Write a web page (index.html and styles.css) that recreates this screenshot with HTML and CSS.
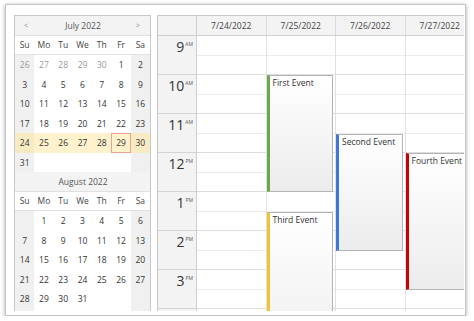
FILE: index.html
```html
<!DOCTYPE html>
<html lang="en">
<head>
    <meta charset="UTF-8">
    <meta name="viewport" content="width=device-width, initial-scale=1.0">
    <title>Calendar</title>
    <link rel="stylesheet" href="styles.css">
</head>
<body>

    <div class="window">
        <div class="content">

            <div class="nav">
                <div class="month">
                    <div class="month-title">
                        <span class="arrow">&lt;</span>
                        <span>July 2022</span>
                        <span class="arrow">&gt;</span>
                    </div>
                    <div class="days">
                        <div class="dayname">Su</div><div class="dayname">Mo</div><div class="dayname">Tu</div><div class="dayname">We</div><div class="dayname">Th</div><div class="dayname">Fr</div><div class="dayname">Sa</div>

                        <div class="day weekend other">26</div><div class="day other">27</div><div class="day other">28</div><div class="day other">29</div><div class="day other">30</div><div class="day">1</div><div class="day weekend">2</div>
                        <div class="day weekend">3</div><div class="day">4</div><div class="day">5</div><div class="day">6</div><div class="day">7</div><div class="day">8</div><div class="day weekend">9</div>
                        <div class="day weekend">10</div><div class="day">11</div><div class="day">12</div><div class="day">13</div><div class="day">14</div><div class="day">15</div><div class="day weekend">16</div>
                        <div class="day weekend">17</div><div class="day">18</div><div class="day">19</div><div class="day">20</div><div class="day">21</div><div class="day">22</div><div class="day weekend">23</div>
                        <div class="day weekend sel">24</div><div class="day sel">25</div><div class="day sel">26</div><div class="day sel">27</div><div class="day sel">28</div><div class="day sel today">29</div><div class="day weekend sel">30</div>
                        <div class="day weekend">31</div><div class="day"></div><div class="day"></div><div class="day"></div><div class="day"></div><div class="day"></div><div class="day weekend"></div>
                    </div>
                </div>

                <div class="month">
                    <div class="month-title">
                        <span class="arrow"></span>
                        <span>August 2022</span>
                        <span class="arrow"></span>
                    </div>
                    <div class="days">
                        <div class="dayname">Su</div><div class="dayname">Mo</div><div class="dayname">Tu</div><div class="dayname">We</div><div class="dayname">Th</div><div class="dayname">Fr</div><div class="dayname">Sa</div>

                        <div class="day weekend"></div><div class="day">1</div><div class="day">2</div><div class="day">3</div><div class="day">4</div><div class="day">5</div><div class="day weekend">6</div>
                        <div class="day weekend">7</div><div class="day">8</div><div class="day">9</div><div class="day">10</div><div class="day">11</div><div class="day">12</div><div class="day weekend">13</div>
                        <div class="day weekend">14</div><div class="day">15</div><div class="day">16</div><div class="day">17</div><div class="day">18</div><div class="day">19</div><div class="day weekend">20</div>
                        <div class="day weekend">21</div><div class="day">22</div><div class="day">23</div><div class="day">24</div><div class="day">25</div><div class="day">26</div><div class="day weekend">27</div>
                        <div class="day weekend">28</div><div class="day">29</div><div class="day">30</div><div class="day">31</div><div class="day"></div><div class="day"></div><div class="day weekend"></div>
                        <div class="day weekend"></div><div class="day"></div><div class="day"></div><div class="day"></div><div class="day"></div><div class="day"></div><div class="day weekend"></div>
                    </div>
                </div>
            </div>

            <div class="calendar">
                <div class="cal-header">
                    <div class="corner"></div>
                    <div class="col-head">7/24/2022</div>
                    <div class="col-head">7/25/2022</div>
                    <div class="col-head">7/26/2022</div>
                    <div class="col-head">7/27/2022</div>
                </div>

                <div class="cal-body">
                    <div class="hours">
                        <div class="hour"><span class="num">9</span><span class="ampm">AM</span></div>
                        <div class="hour"><span class="num">10</span><span class="ampm">AM</span></div>
                        <div class="hour"><span class="num">11</span><span class="ampm">AM</span></div>
                        <div class="hour"><span class="num">12</span><span class="ampm">PM</span></div>
                        <div class="hour"><span class="num">1</span><span class="ampm">PM</span></div>
                        <div class="hour"><span class="num">2</span><span class="ampm">PM</span></div>
                        <div class="hour"><span class="num">3</span><span class="ampm">PM</span></div>
                        <div class="hour"></div>
                    </div>

                    <div class="col">
                        <div class="cell"></div><div class="cell"></div><div class="cell"></div><div class="cell"></div>
                        <div class="cell"></div><div class="cell"></div><div class="cell"></div><div class="cell"></div>
                        <div class="cell"></div><div class="cell"></div><div class="cell"></div><div class="cell"></div>
                        <div class="cell"></div><div class="cell"></div><div class="cell"></div><div class="cell"></div>
                    </div>

                    <div class="col">
                        <div class="cell"></div><div class="cell"></div><div class="cell"></div><div class="cell"></div>
                        <div class="cell"></div><div class="cell"></div><div class="cell"></div><div class="cell"></div>
                        <div class="cell"></div><div class="cell"></div><div class="cell"></div><div class="cell"></div>
                        <div class="cell"></div><div class="cell"></div><div class="cell"></div><div class="cell"></div>
                        <div class="event green" style="top: 39px; height: 117px;">First Event</div>
                        <div class="event yellow" style="top: 175.5px; height: 156px;">Third Event</div>
                    </div>

                    <div class="col">
                        <div class="cell"></div><div class="cell"></div><div class="cell"></div><div class="cell"></div>
                        <div class="cell"></div><div class="cell"></div><div class="cell"></div><div class="cell"></div>
                        <div class="cell"></div><div class="cell"></div><div class="cell"></div><div class="cell"></div>
                        <div class="cell"></div><div class="cell"></div><div class="cell"></div><div class="cell"></div>
                        <div class="event blue" style="top: 97.5px; height: 117px;">Second Event</div>
                    </div>

                    <div class="col">
                        <div class="cell"></div><div class="cell"></div><div class="cell"></div><div class="cell"></div>
                        <div class="cell"></div><div class="cell"></div><div class="cell"></div><div class="cell"></div>
                        <div class="cell"></div><div class="cell"></div><div class="cell"></div><div class="cell"></div>
                        <div class="cell"></div><div class="cell"></div><div class="cell"></div><div class="cell"></div>
                        <div class="event red" style="top: 117px; height: 136.5px;">Fourth Event</div>
                    </div>
                </div>
            </div>

        </div>
    </div>

</body>
</html>
```

FILE: styles.css
```css
body {
    margin: 0;
    background-color: #fff;
    font-family: 'Open Sans', 'Noto Sans', sans-serif;
    color: #333;
}

.window {
    margin: 4px 0 0 5px;
    width: 461px;
    height: 312px;
    box-sizing: border-box;
    border: 1px solid #c4c4c4;
    box-shadow: 0 1px 4px rgba(0, 0, 0, 0.35);
    padding: 10px 1px 4px 8px;
    background-color: #fff;
}

.content {
    display: flex;
    gap: 6px;
    height: 100%;
    overflow: hidden;
}

/* navigator */

.nav {
    flex: 0 0 137px;
    border: 1px solid #c8c8c8;
    box-sizing: border-box;
    font-size: 8.5px;
}

.month-title {
    height: 19.5px;
    display: flex;
    align-items: center;
    justify-content: space-between;
    padding: 0 8px 0 9px;
    background-color: #f3f3f3;
    border-bottom: 1px solid #e0e0e0;
    box-sizing: border-box;
    color: #555;
}

.arrow {
    width: 6px;
    color: #888;
    font-size: 7px;
}

.days {
    display: grid;
    grid-template-columns: repeat(7, 1fr);
    grid-auto-rows: 19.5px;
}

.dayname,
.day {
    display: flex;
    align-items: center;
    justify-content: center;
    box-sizing: border-box;
}

.dayname {
    background-color: #fff;
    border-bottom: 1px solid #e0e0e0;
    color: #444;
}

.day {
    background-color: #fff;
    color: #333;
}

.day.weekend {
    background-color: #f0f0f0;
}

.day.other {
    color: #999;
}

.day.sel {
    background-color: #fff2cc;
}

.day.weekend.sel {
    background-color: #f8ebc4;
}

.day.today {
    border: 1px solid #eaa394;
}

/* calendar */

.calendar {
    flex: 0 0 auto;
    width: 318px;
    border: 1px solid #c8c8c8;
    box-sizing: border-box;
    align-self: flex-start;
}

.cal-header {
    display: flex;
    height: 20px;
    box-sizing: border-box;
    border-bottom: 1px solid #cfcfcf;
    background-color: #f3f3f3;
}

.corner {
    flex: 0 0 39px;
    border-right: 1px solid #cfcfcf;
    box-sizing: border-box;
}

.col-head {
    flex: 0 0 69.5px;
    box-sizing: border-box;
    border-right: 1px solid #dcdcdc;
    display: flex;
    align-items: center;
    justify-content: center;
    font-size: 8.5px;
    color: #444;
}

.cal-body {
    display: flex;
}

.hours {
    flex: 0 0 39px;
    background-color: #f3f3f3;
    border-right: 1px solid #cfcfcf;
    box-sizing: border-box;
}

.hour {
    height: 39px;
    box-sizing: border-box;
    border-bottom: 1px solid #d4d4d4;
    display: flex;
    justify-content: flex-end;
    align-items: flex-start;
    padding: 3px 3px 0 0;
    color: #333;
}

.num {
    font-size: 14px;
    line-height: 16px;
}

.ampm {
    font-size: 5px;
    line-height: 8px;
    margin-left: 1px;
    margin-top: 1px;
    color: #555;
}

.col {
    flex: 0 0 69.5px;
    position: relative;
    box-sizing: border-box;
    border-right: 1px solid #e0e0e0;
}

.cell {
    height: 19.5px;
    box-sizing: border-box;
    border-bottom: 1px solid #ececec;
}

.cell:nth-child(2n) {
    border-bottom-color: #dedede;
}

.event {
    position: absolute;
    left: 0;
    right: 2px;
    box-sizing: border-box;
    border: 1px solid #b4b4b4;
    border-left: 3px solid #6aa84f;
    background: linear-gradient(#fff, #ececec);
    font-size: 8.5px;
    color: #333;
    padding: 1px 0 0 3px;
    white-space: nowrap;
    overflow: hidden;
}

.event.green {
    border-left-color: #6aa84f;
}

.event.yellow {
    border-left-color: #f1c232;
}

.event.blue {
    border-left-color: #3d78d8;
}

.event.red {
    border-left-color: #cc0000;
}
```
